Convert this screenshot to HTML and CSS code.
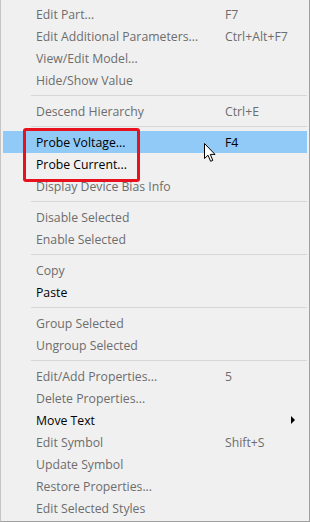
FILE: index.html
```html
<!DOCTYPE html>
<html>
	<head>
		<meta charset="UTF-8">
		<title>Context menu</title>
		<link rel="stylesheet" href="styles.css">
	</head>
	<body>
		<div class="menu">
			<div class="item off"><span class="label">Edit Part...</span><span class="key">F7</span></div>
			<div class="item off"><span class="label">Edit Additional Parameters...</span><span class="key">Ctrl+Alt+F7</span></div>
			<div class="item off"><span class="label">View/Edit Model...</span></div>
			<div class="item off"><span class="label">Hide/Show Value</span></div>
			<div class="sep"></div>
			<div class="item off"><span class="label">Descend Hierarchy</span><span class="key">Ctrl+E</span></div>
			<div class="sep"></div>
			<div class="probe">
				<div class="item hover"><span class="label">Probe Voltage...</span><span class="key">F4</span></div>
				<div class="item"><span class="label">Probe Current...</span></div>
				<div class="mark"></div>
				<svg class="cursor" width="13" height="20" viewBox="0 0 13 20">
					<path d="M0.5 0.5 L0.5 15.5 L4 12.2 L6.6 18.3 L8.8 17.4 L6.3 11.4 L11 11.4 Z" fill="#fff" stroke="#000" stroke-width="1"/>
				</svg>
			</div>
			<div class="item off"><span class="label">Display Device Bias Info</span></div>
			<div class="sep"></div>
			<div class="item off"><span class="label">Disable Selected</span></div>
			<div class="item off"><span class="label">Enable Selected</span></div>
			<div class="sep"></div>
			<div class="item off"><span class="label">Copy</span></div>
			<div class="item"><span class="label">Paste</span></div>
			<div class="sep"></div>
			<div class="item off"><span class="label">Group Selected</span></div>
			<div class="item off"><span class="label">Ungroup Selected</span></div>
			<div class="sep"></div>
			<div class="item off"><span class="label">Edit/Add Properties...</span><span class="key">5</span></div>
			<div class="item off"><span class="label">Delete Properties...</span></div>
			<div class="item sub"><span class="label">Move Text</span><span class="key"></span><span class="arrow"></span></div>
			<div class="item off"><span class="label">Edit Symbol</span><span class="key">Shift+S</span></div>
			<div class="item off"><span class="label">Update Symbol</span></div>
			<div class="item off"><span class="label">Restore Properties...</span></div>
			<div class="item off"><span class="label">Edit Selected Styles</span></div>
		</div>
	</body>
</html>
```

FILE: styles.css
```css
body{
	margin: 0;
}

.menu{
	width: 310px;
	height: 522px;
	box-sizing: border-box;
	padding: 3px 2px 0 2px;
	background: #f0f0f0;
	border-left: 1px solid #c4c4c4;
	border-right: 1px solid #a0a0a0;
	border-bottom: 1px solid #a0a0a0;
	font-family: "Open Sans", "Noto Sans CJK SC", sans-serif;
	font-size: 12.25px;
	color: #000;
}

.item{
	height: 22px;
	display: flex;
	align-items: center;
	padding-left: 33px;
}
.item .label{
	width: 189px;
	white-space: nowrap;
}
.item .key{
	flex: 1;
	white-space: nowrap;
}
.item.off{
	color: #6d6d6d;
}
.item.hover{
	background: #91c9f7;
}
.item .arrow{
	width: 0;
	height: 0;
	margin-right: 12px;
	border-top: 4px solid transparent;
	border-bottom: 4px solid transparent;
	border-left: 4px solid #000;
}

.sep{
	height: 9px;
	box-sizing: border-box;
	padding-top: 4px;
	margin-left: 28px;
}
.sep::before{
	content: "";
	display: block;
	height: 1px;
	background: #d7d7d7;
}

.probe{
	position: relative;
}
.mark{
	position: absolute;
	left: 20px;
	top: -3px;
	width: 111px;
	height: 48px;
	border: 3px solid #e8121f;
	border-radius: 3px;
}
.cursor{
	position: absolute;
	left: 201px;
	top: 12px;
}
```
